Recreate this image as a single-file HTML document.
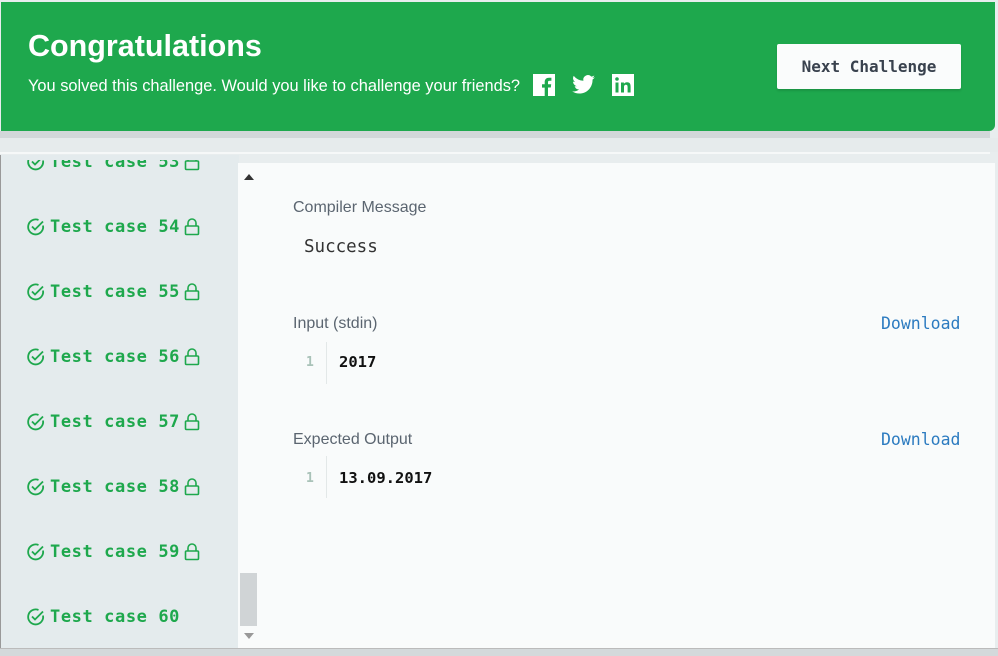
<!DOCTYPE html>
<html><head><meta charset="utf-8"><style>
body{margin:0;width:998px;height:655px;overflow:hidden;background:#e8edee;position:relative;font-family:"Liberation Sans",sans-serif}
.banner{position:absolute;left:1px;top:2px;width:994px;height:129px;background:#1ea84d;border-radius:0 0 6px 0}
.sh1{position:absolute;left:0;top:131px;width:990px;height:7px;background:#d2d7d9}
.sh2{position:absolute;left:0;top:138px;width:998px;height:14px;background:#e6ebec}
.wl{position:absolute;left:0;top:152px;width:990px;height:2px;background:#f6f8f8}
h1{position:absolute;left:28px;top:29px;margin:0;color:#fff;font-size:30.5px;font-weight:bold}
.sub{position:absolute;left:28px;top:77px;color:#fff;font-size:16.4px}
.btn{position:absolute;left:777px;top:44px;width:184px;height:45px;background:#fafcfc;border-radius:2px;box-shadow:0 2px 2px rgba(0,0,0,.12);font-family:"DejaVu Sans Mono",monospace;font-weight:bold;font-size:16px;color:#39424e;text-align:center;line-height:45px}
.left{position:absolute;left:0;top:155px;width:238px;height:493px;background:#e4ebed;border-left:1px solid #999}
.tc{position:absolute;left:26px;font-family:"DejaVu Sans Mono",monospace;font-weight:bold;font-size:17px;letter-spacing:.6px;color:#1ea84d;display:flex;align-items:center;gap:4px;white-space:nowrap}
.clip{position:absolute;left:0;top:160px;width:238px;height:488px;overflow:hidden}
.sb{position:absolute;left:238px;top:163px;width:20px;height:485px;background:#f9fbfb}
.right{position:absolute;left:258px;top:163px;width:737px;height:485px;background:#f9fbfb}
.bot{position:absolute;left:0;top:648px;width:998px;height:7px;background:#d4d9db;border-top:1px solid #bbb}
.lbl{position:absolute;color:#5b6570;font-size:16px}
.dl{position:absolute;left:881px;color:#2c7bc0;font-family:"DejaVu Sans Mono",monospace;font-size:16.5px}
.ln{position:absolute;left:306px;color:#a9c2b8;font-family:"DejaVu Sans Mono",monospace;font-size:13px;font-weight:bold}
.bar{position:absolute;left:326px;width:1px;height:42px;background:#e3e8e8}
.code{position:absolute;left:339px;color:#111;font-family:"DejaVu Sans Mono",monospace;font-weight:bold;font-size:15.5px}
</style></head><body>
<div class="banner"></div>
<div class="sh1"></div><div class="sh2"></div><div class="wl"></div>
<h1>Congratulations</h1>
<div class="sub">You solved this challenge. Would you like to challenge your friends?</div>
<svg style="position:absolute;left:533px;top:74px" width="22" height="22" viewBox="0 0 22 22"><rect width="22" height="22" fill="#fff"/><path d="M15 22V13.5h2.8l.4-3.3H15V8.3c0-1 .3-1.6 1.7-1.6h1.7V3.8c-.3 0-1.3-.1-2.5-.1-2.5 0-4.2 1.5-4.2 4.3v2.3H9v3.3h2.7V22z" fill="#1ea84d"/></svg>
<svg style="position:absolute;left:572px;top:75px" width="23" height="19" viewBox="0 0 24 20"><path d="M24 2.4c-.9.4-1.8.6-2.8.8 1-.6 1.8-1.6 2.2-2.7-1 .6-2 1-3.1 1.2A4.9 4.9 0 0 0 11.9 6 14 14 0 0 1 1.7.9a4.9 4.9 0 0 0 1.5 6.6c-.8 0-1.6-.3-2.2-.6 0 2.4 1.7 4.4 3.9 4.8-.7.2-1.5.2-2.2.1.6 2 2.4 3.4 4.6 3.4A9.9 9.9 0 0 1 0 17.3 14 14 0 0 0 7.5 19.5c9.1 0 14-7.5 14-14v-.6c1-.7 1.8-1.6 2.5-2.5z" fill="#fff"/></svg>
<svg style="position:absolute;left:612px;top:74px" width="22" height="22" viewBox="0 0 22 22"><rect width="22" height="22" fill="#fff"/><rect x="3.5" y="8.5" width="3" height="10" fill="#1ea84d"/><circle cx="5" cy="5" r="1.8" fill="#1ea84d"/><path d="M9 8.5h2.9v1.4c.5-.9 1.6-1.7 3.2-1.7 3 0 3.5 2 3.5 4.5v5.8h-3v-5.1c0-1.2 0-2.7-1.7-2.7s-1.9 1.3-1.9 2.6v5.2H9z" fill="#1ea84d"/></svg>
<div class="btn">Next Challenge</div>
<div class="left"></div>
<div class="clip" id="tcs"></div>
<div class="sb"><div style="position:absolute;left:2px;top:410px;width:17px;height:53px;background:#d0d4d6"></div>
<div style="position:absolute;left:6px;top:11px;border:5px solid transparent;border-bottom:6px solid #333;border-top:0"></div>
<div style="position:absolute;left:6px;top:470px;border:5px solid transparent;border-top:6px solid #999;border-bottom:0"></div></div>
<div class="right"></div>
<div class="lbl" style="left:293px;top:199px">Compiler Message</div>
<div style="position:absolute;left:304px;top:237px;font-family:'DejaVu Sans Mono',monospace;font-size:17.5px;color:#333">Success</div>
<div class="lbl" style="left:293px;top:315px">Input (stdin)</div>
<div class="dl" style="top:314px">Download</div>
<div class="ln" style="top:355px">1</div><div class="bar" style="top:342px"></div>
<div class="code" style="top:353px">2017</div>
<div class="lbl" style="left:293px;top:431px">Expected Output</div>
<div class="dl" style="top:430px">Download</div>
<div class="ln" style="top:471px">1</div><div class="bar" style="top:456px"></div>
<div class="code" style="top:469px">13.09.2017</div>
<div class="bot"></div>
<script>
var h='';for(var i=0;i<8;i++){var n=53+i;var y=-8+65*i;
h+='<div class="tc" style="top:'+y+'px"><svg width="20" height="20" viewBox="0 0 20 20"><path d="M17 8.5A7.5 7.5 0 1 1 12.5 3" fill="none" stroke="#1ea84d" stroke-width="1.8"/><path d="M6 9.5l3 3 8-8" fill="none" stroke="#1ea84d" stroke-width="1.8"/></svg>Test case '+n+(n<60?'<svg width="16" height="18" viewBox="0 0 16 18"><path d="M4 8V5a4 4 0 0 1 8 0v3" fill="none" stroke="#1ea84d" stroke-width="1.6"/><rect x="1.5" y="8" width="13" height="8.5" rx="1" fill="none" stroke="#1ea84d" stroke-width="1.6"/></svg>':'')+'</div>';}
document.getElementById('tcs').innerHTML=h;
</script>
</body></html>
